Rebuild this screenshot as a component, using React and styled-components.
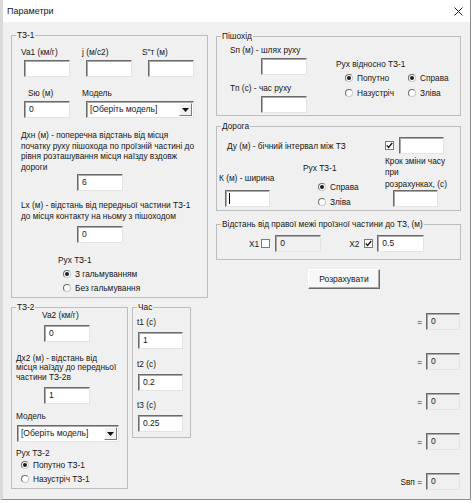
import React from 'react'
import styled, { createGlobalStyle } from 'styled-components'

const GlobalStyle = createGlobalStyle`
  html, body {
    margin: 0;
    padding: 0;
    background: #fff;
  }

  body {
    color: #161616;
    font-family: "Liberation Sans", Arial, sans-serif;
    font-size: 8.3px;
  }
`

const Window = styled.div`
  background: #f0f0f0;
  border-bottom: 1px solid #8c8c8c;
  border-left: 3px solid #dadada;
  border-right: 1px solid #8c8c8c;
  box-sizing: border-box;
  display: flex;
  flex-direction: column;
  height: 500px;
  width: 471px;
`

const TitleBar = styled.div`
  align-items: center;
  background: #fff;
  display: flex;
  flex: 0 0 22px;
  justify-content: space-between;
  padding: 0 7px 0 4px;
`

const Title = styled.span`
  font-size: 9px;
`

const Client = styled.div`
  display: flex;
  gap: 8px;
  padding-left: 8px;
`

const Column = styled.div`
  display: flex;
  flex-direction: column;
  width: ${p => p.$w}px;
`

const Group = styled.fieldset`
  border: 1px solid #bdbdbd;
  box-sizing: border-box;
  height: ${p => p.$h}px;
  margin: ${p => p.$mt || 0}px 0 0 ${p => p.$ml || 0}px;
  min-width: 0;
  padding: 0;
  width: ${p => p.$w}px;
`

const Legend = styled.legend`
  line-height: 8px;
  margin-left: 4px;
  padding: 0 1px;
  white-space: nowrap;
`

const Row = styled.div`
  align-items: ${p => p.$align || 'flex-start'};
  display: flex;
  gap: ${p => p.$gap || 0}px;
  margin: ${p => p.$mt || 0}px 0 0 ${p => p.$ml || 0}px;
`

const Col = styled.div`
  display: flex;
  flex-direction: column;
  flex: none;
  margin: ${p => p.$mt || 0}px 0 0 ${p => p.$ml || 0}px;
  width: ${p => (p.$w ? `${p.$w}px` : 'auto')};
`

const Caption = styled.div`
  flex: none;
  line-height: 10px;
  margin: ${p => p.$mt || 0}px 0 0 ${p => p.$ml || 0}px;
  white-space: nowrap;
  width: ${p => (p.$w ? `${p.$w}px` : 'auto')};
`

const Para = styled.div`
  line-height: ${p => p.$lh}px;
  margin: ${p => p.$mt || 0}px 0 0 ${p => p.$ml || 0}px;
  white-space: nowrap;
`

const Field = styled.input`
  background: ${p => (p.$off ? '#f0f0f0' : '#fff')};
  border: 1px solid;
  border-color: #6b6b6b #e4e4e4 #e4e4e4 #6b6b6b;
  box-shadow: inset 1px 1px 0 #a9a9a9;
  box-sizing: border-box;
  color: #161616;
  flex: none;
  font: 8.5px "Liberation Sans", Arial, sans-serif;
  height: 17px;
  margin: ${p => p.$mt || 0}px 0 0 ${p => p.$ml || 0}px;
  outline: none;
  padding: 0 0 1px 4px;
  width: ${p => p.$w || 46}px;
`

const Caret = styled.div`
  background: #fff;
  border: 1px solid;
  border-color: #6b6b6b #e4e4e4 #e4e4e4 #6b6b6b;
  box-shadow: inset 1px 1px 0 #a9a9a9;
  box-sizing: border-box;
  height: 17px;
  margin: ${p => p.$mt || 0}px 0 0 ${p => p.$ml || 0}px;
  padding: 2px 0 0 3px;
  width: 45px;

  &::before {
    background: #000;
    content: '';
    display: block;
    height: 11px;
    width: 1px;
  }
`

const Select = styled.div`
  background: #fff;
  border: 1px solid;
  border-color: #6b6b6b #e4e4e4 #e4e4e4 #6b6b6b;
  box-shadow: inset 1px 1px 0 #a9a9a9;
  box-sizing: border-box;
  display: flex;
  height: 17px;
  margin: ${p => p.$mt || 0}px 0 0 ${p => p.$ml || 0}px;
  width: ${p => p.$w}px;
`

const SelectText = styled.span`
  flex: 1;
  font-size: 8.5px;
  line-height: 15px;
  overflow: hidden;
  padding-left: 3px;
  white-space: nowrap;
`

const Arrow = styled.span`
  align-items: center;
  background: #f0f0f0;
  border: 1px solid;
  border-color: #fff #7a7a7a #7a7a7a #fff;
  box-sizing: border-box;
  display: flex;
  justify-content: center;
  margin: 1px;
  width: 13px;
`

const RadioList = styled.div`
  display: grid;
  grid-template-columns: ${p => p.$cols || 'auto'};
  margin: ${p => p.$mt || 0}px 0 0 ${p => p.$ml || 0}px;
`

const Radio = styled.div`
  align-items: center;
  display: flex;
  gap: 4px;
  height: ${p => p.$h || 14}px;
  white-space: nowrap;
`

const Dot = styled.span`
  background: #fff;
  border: 1px solid;
  border-color: #6d6d6d #c8c8c8 #c8c8c8 #6d6d6d;
  border-radius: 50%;
  box-sizing: border-box;
  flex: none;
  height: 8px;
  width: 8px;

  &::after {
    background: #1c1c1c;
    border-radius: 50%;
    content: '';
    display: ${p => (p.$on ? 'block' : 'none')};
    height: 4px;
    margin: 1px;
    width: 4px;
  }
`

const Check = styled.span`
  align-items: center;
  background: #fff;
  border: 1px solid #7a7a7a;
  box-sizing: border-box;
  display: flex;
  flex: none;
  height: 9px;
  justify-content: center;
  margin-left: ${p => p.$ml || 0}px;
  width: 9px;
`

const Button = styled.button`
  background: #f7f7f7;
  border: 1px solid;
  border-color: #fff #6a6a6a #6a6a6a #fff;
  box-shadow: inset -1px -1px 0 #a8a8a8;
  color: #161616;
  font: 8.5px "Liberation Sans", Arial, sans-serif;
  height: 20px;
  margin: 9px 0 0 92px;
  padding: 0;
  width: 72px;
`

const Outputs = styled.div`
  align-items: flex-end;
  display: flex;
  flex-direction: column;
  gap: 23px;
  margin-top: 24px;
  padding-right: 1px;
`

const OutRow = styled.div`
  align-items: center;
  display: flex;
  gap: 4px;
  white-space: nowrap;
`

const Tick = () => (
  <svg width="7" height="7" viewBox="0 0 7 7">
    <path d="M0.8 3.4 L2.6 5.4 L6.2 1" fill="none" stroke="#1a1a1a" strokeWidth="1.4" />
  </svg>
)

const Combo = ({ w, mt, ml }) => (
  <Select $w={w} $mt={mt} $ml={ml}>
    <SelectText>[Оберіть модель]</SelectText>
    <Arrow>
      <svg width="7" height="4" viewBox="0 0 7 4">
        <path d="M0 0 H7 L3.5 4 Z" fill="#111" />
      </svg>
    </Arrow>
  </Select>
)

const App = () => (
  <>
    <GlobalStyle />
    <Window>
      <TitleBar>
        <Title>Параметри</Title>
        <svg width="9" height="9" viewBox="0 0 9 9">
          <path d="M0.5 0.5 L8.5 8.5 M8.5 0.5 L0.5 8.5" stroke="#222" strokeWidth="1" />
        </svg>
      </TitleBar>
      <Client>
        <Column $w={197}>
          <Group $w={197} $h={267} $mt={9}>
            <Legend>ТЗ-1</Legend>
            <Row $ml={12} $gap={16} $mt={8}>
              <Col $w={46}>
                <Caption $ml={-3}>Va1 (км/г)</Caption>
                <Field $mt={3} />
              </Col>
              <Col $w={46}>
                <Caption $ml={-4}>j (м/с2)</Caption>
                <Field $mt={3} />
              </Col>
              <Col $w={46}>
                <Caption $ml={-6}>S"т (м)</Caption>
                <Field $mt={3} />
              </Col>
            </Row>
            <Row $ml={12} $gap={16} $mt={11}>
              <Col $w={46}>
                <Caption $ml={4}>Sю (м)</Caption>
                <Field $mt={3} defaultValue="0" />
              </Col>
              <Col>
                <Caption $ml={-4}>Модель</Caption>
                <Combo w={108} mt={3} />
              </Col>
            </Row>
            <Para $lh={10.5} $ml={9} $mt={12}>
              Дхн (м) - поперечна відстань від місця
              <br />
              початку руху пішохода по проїзній частині до
              <br />
              рівня розташування місця наїзду вздовж
              <br />
              дороги
            </Para>
            <Field $ml={65} $mt={2} defaultValue="6" />
            <Para $lh={10.5} $ml={9} $mt={9}>
              Lx (м) - відстань від передньої частини ТЗ-1
              <br />
              до місця контакту на ньому з пішоходом
            </Para>
            <Field $ml={65} $mt={5} defaultValue="0" />
            <Caption $ml={46} $mt={12}>Рух ТЗ-1</Caption>
            <RadioList $ml={51} $mt={2}>
              <Radio><Dot $on />З гальмуванням</Radio>
              <Radio><Dot />Без гальмування</Radio>
            </RadioList>
          </Group>
          <Row $gap={4} $mt={5}>
            <Group $w={117} $h={186}>
              <Legend>ТЗ-2</Legend>
              <Caption $ml={30} $mt={-1}>Va2 (км/г)</Caption>
              <Field $ml={32} $mt={5} defaultValue="0" />
              <Para $lh={9.5} $ml={4} $mt={11.5}>
                Дх2 (м) - відстань від
                <br />
                місця наїзду до передньої
                <br />
                частини ТЗ-2в
              </Para>
              <Field $ml={32} $mt={5} defaultValue="1" />
              <Caption $ml={4} $mt={7}>Модель</Caption>
              <Combo w={102} mt={4} ml={5} />
              <Caption $ml={4} $mt={6}>Рух ТЗ-2</Caption>
              <RadioList $ml={9}>
                <Radio><Dot $on />Попутно ТЗ-1</Radio>
                <Radio><Dot />Назустріч ТЗ-1</Radio>
              </RadioList>
            </Group>
            <Group $w={59} $h={135}>
              <Legend>Час</Legend>
              <Caption $ml={4} $mt={6}>t1 (с)</Caption>
              <Field $w={45} $ml={5} $mt={5} defaultValue="1" />
              <Caption $ml={4} $mt={10}>t2 (с)</Caption>
              <Field $w={45} $ml={5} $mt={5} defaultValue="0.2" />
              <Caption $ml={4} $mt={9}>t3 (с)</Caption>
              <Field $w={45} $ml={5} $mt={5} defaultValue="0.25" />
            </Group>
          </Row>
        </Column>

        <Column $w={245}>
          <Group $w={245} $h={84} $mt={10}>
            <Legend>Пішохід</Legend>
            <Row>
              <Col $ml={13} $w={106}>
                <Caption $mt={5}>Sп (м) - шлях руху</Caption>
                <Field $ml={31} $mt={3} />
                <Caption $mt={8}>Tп (с) - час руху</Caption>
                <Field $ml={31} $mt={3} />
              </Col>
              <Col $mt={19}>
                <Caption>Рух відносно ТЗ-1</Caption>
                <RadioList $cols="63px auto" $ml={9} $mt={1}>
                  <Radio $h={15}><Dot $on />Попутно</Radio>
                  <Radio $h={15}><Dot $on />Справа</Radio>
                  <Radio $h={15}><Dot />Назустріч</Radio>
                  <Radio $h={15}><Dot />Зліва</Radio>
                </RadioList>
              </Col>
            </Row>
          </Group>

          <Group $w={245} $h={89} $mt={6}>
            <Legend>Дорога</Legend>
            <Row $align="center" $mt={7}>
              <Caption $ml={10} $w={158}>Ду (м) - бічний інтервал між ТЗ</Caption>
              <Check><Tick /></Check>
              <Field $w={45} $ml={5} />
            </Row>
            <Row>
              <Col $ml={2} $w={84} $mt={19}>
                <Caption>К (м) - ширина</Caption>
                <Caret $ml={6} $mt={7} />
              </Col>
              <Col $w={82} $mt={9}>
                <Caption>Рух ТЗ-1</Caption>
                <RadioList $ml={15} $mt={6}>
                  <Radio $h={15}><Dot $on />Справа</Radio>
                  <Radio $h={15}><Dot />Зліва</Radio>
                </RadioList>
              </Col>
              <Col $mt={2}>
                <Para $lh={11.3}>
                  Крок зміни часу
                  <br />
                  при
                  <br />
                  розрахунках, (с)
                </Para>
                <Field $w={45} $ml={8} />
              </Col>
            </Row>
          </Group>

          <Group $w={245} $h={40} $mt={9}>
            <Legend>Відстань від правої межі проїзної частини до ТЗ, (м)</Legend>
            <Row $align="center" $mt={7} $ml={32}>
              <Caption>X1</Caption>
              <Check $ml={2} />
              <Field $ml={5} $off defaultValue="0" readOnly />
              <Caption $ml={28}>X2</Caption>
              <Check $ml={5}><Tick /></Check>
              <Field $w={47} $ml={4} defaultValue="0.5" />
            </Row>
          </Group>

          <Button>Розрахувати</Button>

          <Outputs>
            <OutRow>=<Field $w={34} $off defaultValue="0" readOnly /></OutRow>
            <OutRow>=<Field $w={34} $off defaultValue="0" readOnly /></OutRow>
            <OutRow>=<Field $w={34} $off defaultValue="0" readOnly /></OutRow>
            <OutRow>=<Field $w={34} $off defaultValue="0" readOnly /></OutRow>
            <OutRow>Sвп =<Field $w={34} $off defaultValue="0" readOnly /></OutRow>
          </Outputs>
        </Column>
      </Client>
    </Window>
  </>
)

export default App
